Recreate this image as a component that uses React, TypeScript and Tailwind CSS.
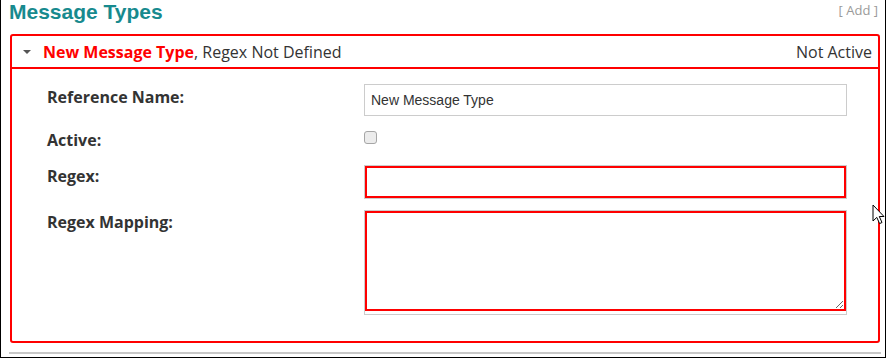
import React from 'react';

const labelFont = { fontFamily: '"Open Sans", "Noto Sans", sans-serif' };

const Cursor: React.FC = () => (
  <svg
    className="absolute left-[871px] top-[204px]"
    width="13"
    height="21"
    viewBox="0 0 13 21"
  >
    <path
      d="M1 1 L1 17 L4.8 13.4 L7.6 19.6 L10 18.5 L7.3 12.5 L12 12.5 Z"
      fill="#fff"
      stroke="#000"
      strokeWidth="1"
      strokeLinejoin="miter"
    />
  </svg>
);

const App: React.FC = () => {
  return (
    <div className="relative w-[886px] h-[358px] overflow-hidden bg-white border-l border-r border-b border-black pl-[8px] pr-[4px]">
      {/* title row */}
      <div className="flex items-start justify-between h-[34px]">
        <h1
          className="text-[21px] leading-[24px] font-bold text-[#178a8e]"
          style={{ fontFamily: '"Liberation Sans", Arial, sans-serif' }}
        >
          Message Types
        </h1>
        <span
          className="mt-[3px] mr-[3px] text-[13px] leading-[14px] text-[#9a9a9a]"
          style={labelFont}
        >
          [ Add ]
        </span>
      </div>

      {/* panel */}
      <div className="border-b-2 border-[#c8c8c8] pb-[9px]">
        <div className="mx-[1px] border-2 border-[#ff0000] rounded-[3px]" style={labelFont}>
          <div className="flex items-center justify-between h-[33px] border-b-2 border-[#ff0000] pl-[11px] pr-[6px]">
            <div className="flex items-center text-[16px] text-[#333]">
              <span className="w-0 h-0 border-l-[4px] border-r-[4px] border-t-[4px] border-l-transparent border-r-transparent border-t-[#555] mr-[12px]" />
              <span className="font-bold text-[#ff0000]">New Message Type</span>
              <span>, Regex Not Defined</span>
            </div>
            <span className="text-[16px] text-[#333]">Not Active</span>
          </div>

          <div className="pt-[15px] pb-[26px] pl-[35px] text-[#333]">
            <div className="flex items-start">
              <label className="w-[317px] pt-[3px] text-[16px] leading-[20px] font-bold">Reference Name:</label>
              <input
                className="w-[483px] h-[32px] border border-[#cccccc] px-[6px] text-[14px] text-[#333] outline-none"
                style={{ fontFamily: '"Liberation Sans", Arial, sans-serif' }}
                defaultValue="New Message Type"
              />
            </div>

            <div className="flex items-start mt-[14px]">
              <label className="w-[317px] text-[16px] leading-[20px] font-bold">Active:</label>
              <input
                type="checkbox"
                className="appearance-none mt-[1px] w-[13px] h-[13px] rounded-[3px] border border-[#a6a6a6] bg-[#ececec]"
              />
            </div>

            <div className="flex items-start mt-[15px]">
              <label className="w-[317px] pt-[1px] text-[16px] leading-[20px] font-bold">Regex:</label>
              <input className="w-[483px] h-[34px] border border-[#cccccc] shadow-[inset_0_0_0_2px_#ff0000] outline-none" />
            </div>

            <div className="flex items-start mt-[11px]">
              <label className="w-[317px] pt-[2px] text-[16px] leading-[20px] font-bold">Regex Mapping:</label>
              <div className="w-[483px] border border-[#cccccc] pb-[3px]">
                <textarea className="block w-full h-[100px] border-2 border-[#ff0000] outline-none" />
              </div>
            </div>
          </div>
        </div>
      </div>

      <Cursor />
    </div>
  );
};

export default App;
